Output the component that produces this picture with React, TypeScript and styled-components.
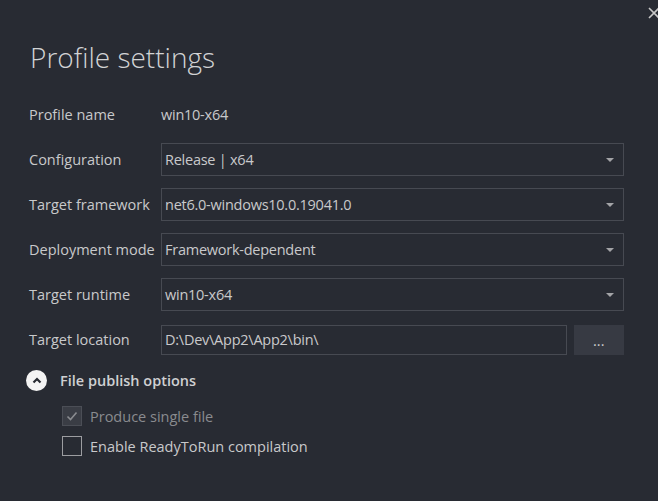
import styled, { createGlobalStyle } from "styled-components";

const GlobalStyle = createGlobalStyle`
  html, body {
    margin: 0;
    padding: 0;
    background: #282b33;
  }
  * {
    box-sizing: border-box;
  }
`;

const fields = [
  { label: "Configuration", value: "Release | x64" },
  { label: "Target framework", value: "net6.0-windows10.0.19041.0" },
  { label: "Deployment mode", value: "Framework-dependent" },
  { label: "Target runtime", value: "win10-x64" },
];

const App = () => {
  return (
    <>
      <GlobalStyle />
      <Page>
        <CloseButton aria-label="Close">
          <svg width="12" height="12" viewBox="0 0 12 12">
            <path d="M1 1 L11 11 M11 1 L1 11" stroke="#c8c8c8" strokeWidth="1.6" />
          </svg>
        </CloseButton>
        <Title>Profile settings</Title>
        <Form>
          <Label>Profile name</Label>
          <Value>win10-x64</Value>
          {fields.map((f) => (
            <Row key={f.label}>
              <Label>{f.label}</Label>
              <Select>
                <Value>{f.value}</Value>
                <Arrow />
              </Select>
            </Row>
          ))}
          <Label>Target location</Label>
          <LocationField>
            <TextInput>
              <Value>D:\Dev\App2\App2\bin\</Value>
            </TextInput>
            <BrowseButton>...</BrowseButton>
          </LocationField>
        </Form>
        <Expander>
          <ExpandIcon>
            <svg width="10" height="7" viewBox="0 0 10 7">
              <path d="M1.5 5.5 L5 2 L8.5 5.5" stroke="#282b33" strokeWidth="2.2" fill="none" />
            </svg>
          </ExpandIcon>
          <ExpanderTitle>File publish options</ExpanderTitle>
        </Expander>
        <Options>
          <CheckRow>
            <CheckBox disabled>
              <svg width="14" height="14" viewBox="0 0 14 14">
                <path d="M2.5 7.5 L5.5 10.5 L11.5 3.5" stroke="#8a8c90" strokeWidth="1.6" fill="none" />
              </svg>
            </CheckBox>
            <CheckLabel disabled>Produce single file</CheckLabel>
          </CheckRow>
          <CheckRow>
            <CheckBox />
            <CheckLabel>Enable ReadyToRun compilation</CheckLabel>
          </CheckRow>
        </Options>
      </Page>
    </>
  );
};

export default App;

const Page = styled.div`
  position: relative;
  width: 658px;
  height: 501px;
  overflow: hidden;
  background: #282b33;
  padding: 37px 0 0 29px;
  font-family: "Open Sans", "Noto Sans", sans-serif;
  color: #c8c9cb;
`;

const CloseButton = styled.div`
  position: absolute;
  top: 7px;
  right: -2px;
  width: 12px;
  height: 12px;
  display: flex;
`;

const Title = styled.h1`
  margin: 0 0 0 1px;
  font-size: 28px;
  font-weight: 300;
  line-height: 40px;
  color: #d2d3d5;
`;

const Form = styled.div`
  display: grid;
  grid-template-columns: 132px 463px;
  grid-auto-rows: 33px;
  row-gap: 12px;
  margin-top: 21px;
  align-items: center;
`;

const Row = styled.div`
  display: contents;
`;

const Label = styled.div`
  font-size: 14.5px;
  line-height: 20px;
`;

const Value = styled.span`
  font-size: 14.5px;
  line-height: 20px;
  letter-spacing: -0.25px;
`;

const Select = styled.div`
  display: flex;
  align-items: center;
  justify-content: space-between;
  height: 33px;
  padding: 0 9px 0 3px;
  border: 1px solid #474a52;
`;

const Arrow = styled.span`
  width: 0;
  height: 0;
  border-left: 4px solid transparent;
  border-right: 4px solid transparent;
  border-top: 4px solid #a3a4a7;
`;

const LocationField = styled.div`
  display: flex;
  gap: 7px;
  height: 30px;
`;

const TextInput = styled.div`
  flex: 1;
  display: flex;
  align-items: center;
  padding: 0 3px;
  border: 1px solid #474a52;
`;

const BrowseButton = styled.div`
  width: 50px;
  display: flex;
  align-items: flex-end;
  justify-content: center;
  padding-bottom: 7px;
  background: #373a43;
  font-size: 12px;
  font-weight: 600;
  line-height: 12px;
  letter-spacing: 0.5px;
  color: #c8c9cb;
`;

const Expander = styled.div`
  display: flex;
  align-items: center;
  gap: 13px;
  margin: 13px 0 0 -3px;
  height: 23px;
`;

const ExpandIcon = styled.div`
  width: 21px;
  height: 21px;
  border-radius: 50%;
  background: #f4f4f4;
  display: flex;
  align-items: center;
  justify-content: center;
`;

const ExpanderTitle = styled.div`
  font-size: 14.5px;
  font-weight: 600;
  color: #cfd0d2;
`;

const Options = styled.div`
  display: flex;
  flex-direction: column;
  gap: 10px;
  margin: 14px 0 0 33px;
`;

const CheckRow = styled.div`
  display: flex;
  align-items: center;
  gap: 8px;
  height: 20px;
`;

const CheckBox = styled.div<{ disabled?: boolean }>`
  width: 20px;
  height: 20px;
  display: flex;
  align-items: center;
  justify-content: center;
  border: 1px solid ${({ disabled }) => (disabled ? "#4b4e56" : "#9c9da1")};
  background: ${({ disabled }) => (disabled ? "#3a3d45" : "transparent")};
`;

const CheckLabel = styled.div<{ disabled?: boolean }>`
  font-size: 14.5px;
  color: ${({ disabled }) => (disabled ? "#8a8b8f" : "#c8c9cb")};
`;
